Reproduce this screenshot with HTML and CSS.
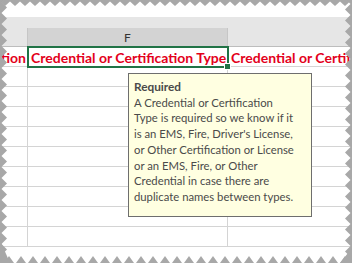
FILE: index.html
```html
<!DOCTYPE html>
<html>
<head>
<meta charset="utf-8">
<link rel="stylesheet" href="styles.css">
</head>
<body>
<div class="page">
  <div class="formula-bar"></div>
  <div class="header-gap"></div>
  <div class="grid">
    <div class="colhead">&nbsp;</div>
    <div class="colhead sel">F</div>
    <div class="colhead last">&nbsp;</div>

    <div class="cell edge"><span class="txt">tion</span></div>
    <div class="cell active"><span class="txt">Credential or Certification Type</span><span class="handle"></span></div>
    <div class="cell last"><span class="txt">Credential or Certification Type</span></div>

    <div class="cell"></div><div class="cell"></div><div class="cell last"></div>
    <div class="cell"></div><div class="cell"></div><div class="cell last"></div>
    <div class="cell"></div><div class="cell"></div><div class="cell last"></div>
    <div class="cell"></div><div class="cell"></div><div class="cell last"></div>
    <div class="cell"></div><div class="cell"></div><div class="cell last"></div>
    <div class="cell"></div><div class="cell"></div><div class="cell last"></div>
    <div class="cell"></div><div class="cell"></div><div class="cell last"></div>
    <div class="cell"></div><div class="cell"></div><div class="cell last"></div>
    <div class="cell"></div><div class="cell"></div><div class="cell last"></div>
  </div>

  <div class="tip">
    <div class="tip-title">Required</div>
    <div class="tip-body">A Credential or Certification<br>Type is required so we know if it<br>is an EMS, Fire, Driver's License,<br>or Other Certification or License<br>or an EMS, Fire, or Other<br>Credential in case there are<br>duplicate names between types.</div>
  </div>

  <svg class="tear" width="352" height="263" viewBox="0 0 352 263" xmlns="http://www.w3.org/2000/svg">
    <defs>
      <pattern id="pt" x="0" y="0" width="10" height="7" patternUnits="userSpaceOnUse">
        <polygon points="0,0 10,0 10,1.5 5,6 0,1.5" fill="#a8a8a8"/>
      </pattern>
      <pattern id="pl" x="0" y="2" width="7" height="11" patternUnits="userSpaceOnUse">
        <polygon points="0,0 1.5,0 7,5.5 1.5,11 0,11" fill="#a8a8a8"/>
      </pattern>
      <pattern id="pr" x="345" y="4" width="7" height="11" patternUnits="userSpaceOnUse">
        <polygon points="7,0 5.5,0 0,5.5 5.5,11 7,11" fill="#a8a8a8"/>
      </pattern>
      <pattern id="pb" x="3" y="254" width="12" height="9" patternUnits="userSpaceOnUse">
        <polygon points="1,9 6,2 11,9" fill="#a8a8a8"/>
      </pattern>
    </defs>
    <rect x="0" y="0" width="352" height="7" fill="url(#pt)"/>
    <rect x="0" y="0" width="7" height="263" fill="url(#pl)"/>
    <rect x="345" y="0" width="7" height="263" fill="url(#pr)"/>
    <rect x="0" y="254" width="352" height="9" fill="url(#pb)"/>
    <polygon points="0,240 0,263 10,263" fill="#a8a8a8"/>
    <polygon points="352,248 352,263 340,263" fill="#a8a8a8"/>
  </svg>
</div>
</body>
</html>
```

FILE: styles.css
```css
html, body {
  margin: 0;
  padding: 0;
  background: #ffffff;
}

.page {
  position: relative;
  width: 352px;
  height: 263px;
  overflow: hidden;
  background: #ffffff;
  font-family: "Lato", "Open Sans", sans-serif;
}

.formula-bar {
  height: 17px;
  background: #ffffff;
}

.header-gap {
  height: 11px;
  background: #e6e6e6;
}

.grid {
  display: grid;
  grid-template-columns: 28px 200px 1fr;
  grid-auto-rows: 20px;
  grid-template-rows: 19px;
}

.colhead {
  background: #e6e6e6;
  border-right: 1px solid #c6c6c6;
  border-bottom: 1px solid #bdbdbd;
  box-sizing: border-box;
  font-size: 12px;
  color: #444444;
  display: flex;
  align-items: center;
  justify-content: center;
}

.colhead.sel {
  background: #d3d3d3;
  color: #333333;
}

.colhead.last {
  border-right: none;
}

.cell {
  position: relative;
  border-right: 1px solid #d4d4d4;
  border-bottom: 1px solid #d4d4d4;
  box-sizing: border-box;
  display: flex;
  align-items: center;
  overflow: hidden;
  white-space: nowrap;
}

.cell.last {
  border-right: none;
}

.cell.edge {
  justify-content: flex-end;
  padding-right: 1px;
}

.txt {
  font-weight: 700;
  font-size: 14px;
  color: #e3001b;
  padding-left: 3px;
  padding-top: 1px;
}

.cell.active {
  overflow: visible;
  outline: 2px solid #217346;
  outline-offset: -1px;
  z-index: 2;
}

.handle {
  position: absolute;
  right: -4px;
  bottom: -4px;
  width: 5px;
  height: 5px;
  background: #217346;
  border: 1px solid #ffffff;
}

.tip {
  position: absolute;
  left: 128px;
  top: 73px;
  width: 184px;
  height: 144px;
  box-sizing: border-box;
  background: #ffffe1;
  border: 1px solid #6e6e6e;
  padding: 5px 5px;
  color: #4a4a4a;
  font-size: 11.3px;
  line-height: 15.7px;
  white-space: nowrap;
  z-index: 5;
}

.tip-title {
  font-weight: 700;
  font-size: 11.8px;
}

.tear {
  position: absolute;
  left: 0;
  top: 0;
  z-index: 10;
}
```
